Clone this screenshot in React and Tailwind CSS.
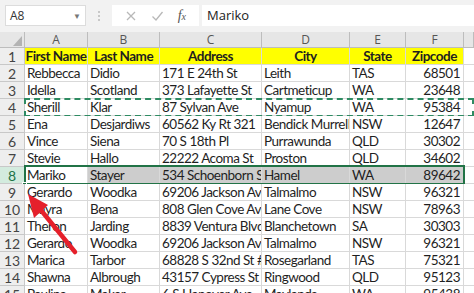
import React from 'react';

const cols = 'grid grid-cols-[25px_63px_72px_102px_88px_56px_58px_1fr]';

const rows = [
  ['Rebbecca', 'Didio', '171 E 24th St', 'Leith', 'TAS', '68501'],
  ['Idella', 'Scotland', '373 Lafayette St', 'Cartmeticup', 'WA', '23648'],
  ['Sherill', 'Klar', '87 Sylvan Ave', 'Nyamup', 'WA', '95384'],
  ['Ena', 'Desjardiws', '60562 Ky Rt 321', 'Bendick Murrell', 'NSW', '12647'],
  ['Vince', 'Siena', '70 S 18th Pl', 'Purrawunda', 'QLD', '30302'],
  ['Stevie', 'Hallo', '22222 Acoma St', 'Proston', 'QLD', '34602'],
  ['Mariko', 'Stayer', '534 Schoenborn St', 'Hamel', 'WA', '89642'],
  ['Gerardo', 'Woodka', '69206 Jackson Ave', 'Talmalmo', 'NSW', '96321'],
  ['Mayra', 'Bena', '808 Glen Cove Ave', 'Lane Cove', 'NSW', '78963'],
  ['Theron', 'Jarding', '8839 Ventura Blvd', 'Blanchetown', 'SA', '30303'],
  ['Gerardo', 'Woodka', '69206 Jackson Ave', 'Talmalmo', 'NSW', '96321'],
  ['Marica', 'Tarbor', '68828 S 32nd St #6', 'Rosegarland', 'TAS', '75321'],
  ['Shawna', 'Albrough', '43157 Cypress St', 'Ringwood', 'QLD', '95123'],
  ['Paulina', 'Maker', '6 S Hanover Ave', 'Maylands', 'WA', '95438'],
];

const headers = ['First Name', 'Last Name', 'Address', 'City', 'State', 'Zipcode'];

const cell = 'h-[17px] border-r border-b border-[#d9d9d9] overflow-hidden whitespace-nowrap text-[13.5px] leading-[16px] tracking-[-0.5px]';

const Row = ({ n, values }) => {
  const selected = n === 8;
  return (
    <div className={`${cols} relative`}>
      <div
        className={`h-[17px] border-r border-b border-[#c8c8c8] flex items-center justify-center text-[14px] ${
          selected ? 'bg-[#d3ebde] text-[#217346] border-r-[#217346]' : 'bg-[#eeeeee] text-[#444]'
        }`}
      >
        {n}
      </div>
      {values.map((v, i) => (
        <div
          key={i}
          className={`${cell} ${i === 5 ? 'text-right pr-[3px]' : 'pl-[2px]'} ${
            selected && i > 0 ? 'bg-[#cdcdcd]' : 'bg-white'
          }`}
        >
          {v}
        </div>
      ))}
      <div className={`${cell} bg-white border-r-0`} />
      {n === 4 && (
        <div className="absolute left-[24px] right-0 top-[-1px] bottom-[-1px] border-2 border-dashed border-[#2e8b62] pointer-events-none" />
      )}
      {selected && (
        <>
          <div className="absolute left-[24px] w-[441px] top-[-2px] h-[20px] border-2 border-[#217346] pointer-events-none" />
          <div className="absolute left-[22px] top-[15px] w-[5px] h-[5px] bg-[#217346] border border-white" />
        </>
      )}
    </div>
  );
};

export default function App() {
  return (
    <div className="w-[474px] h-[293px] overflow-hidden relative bg-white font-['Lato',sans-serif] text-[#1f1f1f]">
      {/* formula bar */}
      <div className="h-[32px] bg-[#f2f2f2] flex items-start pt-[5px] font-['Open_Sans',sans-serif]">
        <div className="ml-[5px] w-[81px] h-[21px] bg-white border border-[#dcdcdc] flex items-center justify-between px-[4px] text-[12px] text-[#333]">
          <span>A8</span>
          <span className="text-[8px] text-[#777]">▼</span>
        </div>
        <div className="w-[26px] h-[21px] flex flex-col items-center justify-center gap-[2px]">
          <span className="w-[2px] h-[2px] bg-[#c8c8c8]" />
          <span className="w-[2px] h-[2px] bg-[#c8c8c8]" />
          <span className="w-[2px] h-[2px] bg-[#c8c8c8]" />
        </div>
        <div className="w-[87px] h-[21px] bg-white flex items-center justify-around px-[6px] text-[#b5b5b5]">
          <svg width="12" height="12" viewBox="0 0 12 12" stroke="#b8b8b8" strokeWidth="1.3" fill="none">
            <path d="M2 2 L10 10 M10 2 L2 10" />
          </svg>
          <svg width="13" height="12" viewBox="0 0 13 12" stroke="#b8b8b8" strokeWidth="1.3" fill="none">
            <path d="M1.5 6.5 L5 10 L11.5 2" />
          </svg>
          <span className="font-['Liberation_Serif',serif] italic text-[14px] text-[#555] leading-none">
            f<span className="text-[10px]">x</span>
          </span>
        </div>
        <div className="ml-[3px] flex-1 h-[21px] bg-white flex items-center pl-[5px] text-[13px] text-[#222]">
          Mariko
        </div>
      </div>

      {/* column headers */}
      <div className={`${cols} font-['Open_Sans',sans-serif]`}>
        <div className="h-[16px] bg-[#e6e6e6] border-r border-b border-[#bdbdbd] relative">
          <svg className="absolute right-[2px] bottom-[1px]" width="9" height="10" viewBox="0 0 9 10">
            <path d="M9 0 L9 10 L0 10 Z" fill="#b3b3b3" />
          </svg>
        </div>
        {['A', 'B', 'C', 'D', 'E', 'F', ''].map((c, i) => (
          <div
            key={i}
            className="h-[16px] bg-[#e6e6e6] border-r border-b border-[#bdbdbd] flex items-center justify-center text-[12px] text-[#555]"
          >
            {c}
          </div>
        ))}
      </div>

      {/* header row */}
      <div className={cols}>
        <div className="h-[17px] bg-[#eeeeee] border-r border-b border-[#c8c8c8] flex items-center justify-center text-[14px] text-[#444]">
          1
        </div>
        {headers.map((h) => (
          <div key={h} className={`${cell} bg-[#ffff00] font-bold text-center border-[#bdbd9a]`}>
            {h}
          </div>
        ))}
        <div className={`${cell} bg-white border-r-0`} />
      </div>

      {rows.map((r, i) => (
        <Row key={i} n={i + 2} values={r} />
      ))}

      {/* red arrow */}
      <svg className="absolute left-0 top-0 pointer-events-none" width="474" height="293">
        <line x1="75" y1="252" x2="40" y2="209" stroke="#e5202b" strokeWidth="4.5" strokeLinecap="round" />
        <polygon points="28,194 48,205 34,218" fill="#e5202b" />
      </svg>
    </div>
  );
}
